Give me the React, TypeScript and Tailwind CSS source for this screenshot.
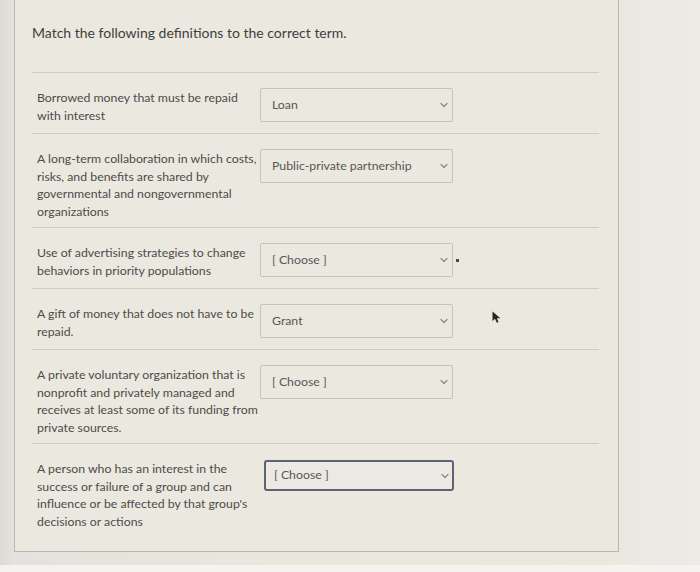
import React from "react";

const rows: { text: string; value: string; focused?: boolean; dot?: boolean }[] = [
  { text: "Borrowed money that must be repaid with interest", value: "Loan" },
  {
    text: "A long-term collaboration in which costs, risks, and benefits are shared by governmental and nongovernmental organizations",
    value: "Public-private partnership",
  },
  { text: "Use of advertising strategies to change behaviors in priority populations", value: "[ Choose ]", dot: true },
  { text: "A gift of money that does not have to be repaid.", value: "Grant" },
  {
    text: "A private voluntary organization that is nonprofit and privately managed and receives at least some of its funding from private sources.",
    value: "[ Choose ]",
  },
  {
    text: "A person who has an interest in the success or failure of a group and can influence or be affected by that group's decisions or actions",
    value: "[ Choose ]",
    focused: true,
  },
];

function Chevron() {
  return (
    <svg width="8" height="6" viewBox="0 0 8 6" className="shrink-0">
      <path d="M1 1.5 L4 4.5 L7 1.5" fill="none" stroke="#8a8984" strokeWidth="1.2" strokeLinecap="round" strokeLinejoin="round" />
    </svg>
  );
}

export default function App() {
  return (
    <div
      className="relative w-[700px] h-[572px] overflow-hidden bg-[linear-gradient(90deg,#dcdbd6_0px,#e4e2dc_14px,#eae7df_300px,#ebe8e0_620px,#ecebe6_700px)]"
      style={{ fontFamily: "Lato, 'Open Sans', sans-serif" }}
    >
      <div className="ml-[14px] w-[605px] h-[552px] border-l border-r border-b border-[#b9b7b0] bg-[#ebe8e0] pl-[17px] pr-[19px] pt-[23px]">
        <div className="text-[14px] leading-[20px] text-[#3f3e3b] mb-[29px]">
          Match the following definitions to the correct term.
        </div>
        {rows.map((r, i) => (
          <div key={i} className="border-t border-[#cfccc5]">
            <div className="flex items-start pt-[15px] pl-[5px]">
              <div className="w-[223px] pr-[1px] pt-[1px] pb-[7px] text-[12.3px] leading-[17.5px] text-[#4d4c48]">
                {r.text}
              </div>
              <div className="pb-[11px] relative">
                <div
                  className={
                    r.focused
                      ? "w-[190px] h-[31px] ml-[4px] mt-[1px] border-2 border-[#5b6476] rounded-[3px] flex items-center justify-between pl-[8px] pr-[3px] bg-[#ece9e2]"
                      : "w-[193px] h-[34px] border border-[#c6c3bb] rounded-[2px] flex items-center justify-between pl-[11px] pr-[4px] bg-[#ebe8e0]"
                  }
                >
                  <span className="text-[12.3px] text-[#585753]">{r.value}</span>
                  <Chevron />
                </div>
                {r.dot && <div className="absolute left-[196px] top-[16px] w-[3px] h-[3px] bg-[#4a4a48]" />}
              </div>
            </div>
          </div>
        ))}
      </div>
      <div className="absolute left-0 right-0 top-[565px] h-[7px] bg-[#f4f3ef]" />
      <svg className="absolute left-[492px] top-[311px]" width="10" height="13" viewBox="0 0 10 13">
        <path d="M0.5 0.5 L0.5 10 L3 7.8 L4.8 11.8 L6.5 11 L4.8 7.2 L8.3 7.2 Z" fill="#262626" />
      </svg>
    </div>
  );
}
